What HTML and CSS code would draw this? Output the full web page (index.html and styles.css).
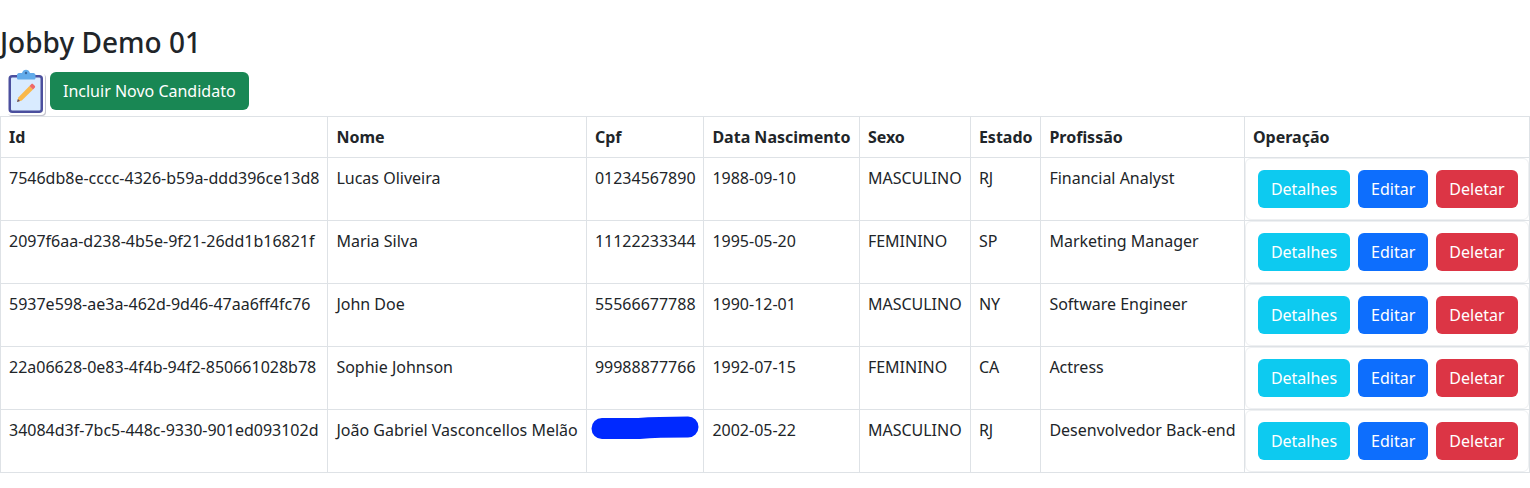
FILE: index.html
```html
<!DOCTYPE html>
<html>
<head>
  <meta charset="UTF-8">
  <title>Jobby Demo 01</title>
  <link rel="stylesheet" href="styles.css">
</head>
<body>
  <h3 class="title">Jobby Demo 01</h3>

  <div class="toolbar">
    <svg class="logo" xmlns="http://www.w3.org/2000/svg" viewBox="0 0 40 48">
      <rect x="2" y="6" width="38" height="42" rx="4" fill="#c4c4ce"/>
      <rect x="1" y="5" width="38" height="42" rx="4" fill="#fff"/>
      <path d="M9 6c1-3 2-3 3-3h3c2-4 9-4 11 0h3c1 0 2 0 3 3z" fill="#fff"/>
      <rect x="3.750" y="8.250" width="32" height="35.500" rx="2.500" fill="#d9ebff" stroke="#4b4f9e" stroke-width="2.500"/>
      <path d="M11 10V7c0-1 .8-2 2-2h3c1-4.500 7-4.500 8 0h3.500c1 0 2 1 2 2v3c0 1-.8 1.500-1.500 1.500H12.500C11.800 11.500 11 11 11 10z" fill="#62abea"/>
      <circle cx="20" cy="5" r="1.200" fill="#39689e"/>
      <path d="M11 34l1.500-4.800L23.500 18l3.500 3.500L15.800 32.500z" fill="#f9b84a"/>
      <path d="M23.500 18l1.700-1.700c.6-.6 1.400-.6 2 0l1.500 1.500c.6.6.6 1.400 0 2L27 21.500z" fill="#ee6a6a"/>
      <path d="M11 34l.9-3 2.100 2.100z" fill="#5a4a6a"/>
    </svg>
    <button class="btn btn-success">Incluir Novo Candidato</button>
  </div>

  <table class="candidates">
    <thead>
      <tr>
        <th class="col-id">Id</th>
        <th class="col-nome">Nome</th>
        <th class="col-cpf">Cpf</th>
        <th class="col-data">Data Nascimento</th>
        <th class="col-sexo">Sexo</th>
        <th class="col-estado">Estado</th>
        <th class="col-prof">Profissão</th>
        <th>Operação</th>
      </tr>
    </thead>
    <tbody>
      <tr>
        <td>7546db8e-cccc-4326-b59a-ddd396ce13d8</td>
        <td>Lucas Oliveira</td>
        <td>01234567890</td>
        <td>1988-09-10</td>
        <td>MASCULINO</td>
        <td>RJ</td>
        <td>Financial Analyst</td>
        <td class="ops">
          <div class="ops-box">
            <button class="btn btn-info">Detalhes</button>
            <button class="btn btn-primary">Editar</button>
            <button class="btn btn-danger">Deletar</button>
          </div>
        </td>
      </tr>
      <tr>
        <td>2097f6aa-d238-4b5e-9f21-26dd1b16821f</td>
        <td>Maria Silva</td>
        <td>11122233344</td>
        <td>1995-05-20</td>
        <td>FEMININO</td>
        <td>SP</td>
        <td>Marketing Manager</td>
        <td class="ops">
          <div class="ops-box">
            <button class="btn btn-info">Detalhes</button>
            <button class="btn btn-primary">Editar</button>
            <button class="btn btn-danger">Deletar</button>
          </div>
        </td>
      </tr>
      <tr>
        <td>5937e598-ae3a-462d-9d46-47aa6ff4fc76</td>
        <td>John Doe</td>
        <td>55566677788</td>
        <td>1990-12-01</td>
        <td>MASCULINO</td>
        <td>NY</td>
        <td>Software Engineer</td>
        <td class="ops">
          <div class="ops-box">
            <button class="btn btn-info">Detalhes</button>
            <button class="btn btn-primary">Editar</button>
            <button class="btn btn-danger">Deletar</button>
          </div>
        </td>
      </tr>
      <tr>
        <td>22a06628-0e83-4f4b-94f2-850661028b78</td>
        <td>Sophie Johnson</td>
        <td>99988877766</td>
        <td>1992-07-15</td>
        <td>FEMININO</td>
        <td>CA</td>
        <td>Actress</td>
        <td class="ops">
          <div class="ops-box">
            <button class="btn btn-info">Detalhes</button>
            <button class="btn btn-primary">Editar</button>
            <button class="btn btn-danger">Deletar</button>
          </div>
        </td>
      </tr>
      <tr>
        <td>34084d3f-7bc5-448c-9330-901ed093102d</td>
        <td>João Gabriel Vasconcellos Melão</td>
        <td class="hidden-cpf">
          <span class="cpf-text">00000000000</span>
          <!-- scribbled over in the original -->
          <svg class="scribble" xmlns="http://www.w3.org/2000/svg" viewBox="0 0 117 26">
            <path d="M15 13.500H52C64 12.500 84 12 101 12" fill="none" stroke="#0029ff" stroke-width="21" stroke-linecap="round"/>
          </svg>
        </td>
        <td>2002-05-22</td>
        <td>MASCULINO</td>
        <td>RJ</td>
        <td>Desenvolvedor Back-end</td>
        <td class="ops">
          <div class="ops-box">
            <button class="btn btn-info">Detalhes</button>
            <button class="btn btn-primary">Editar</button>
            <button class="btn btn-danger">Deletar</button>
          </div>
        </td>
      </tr>
    </tbody>
  </table>
</body>
</html>
```

FILE: styles.css
```css
* {
  box-sizing: border-box;
}

body {
  font-family: "Noto Sans", sans-serif;
  font-size: 16px;
  line-height: 1.5;
  margin: 0;
  color: #212529;
  background-color: #fff;
}

.title {
  font-size: 28px;
  font-weight: 500;
  line-height: 1.2;
  margin: 0;
  padding-top: 26px;
  height: 70px;
}

.toolbar {
  display: flex;
  align-items: flex-start;
  gap: 4px;
  height: 46px;
}

.logo {
  width: 40px;
  height: 48px;
  margin-left: 6px;
  margin-top: -2px;
}

.btn {
  font-family: inherit;
  font-size: 16px;
  line-height: 24px;
  padding: 6px 12px;
  border: 1px solid transparent;
  border-radius: 6px;
  color: #fff;
  cursor: pointer;
}

.toolbar .btn {
  margin-top: 2px;
}

.btn-success {
  background-color: #198754;
}

.btn-info {
  background-color: #0dcaf0;
}

.btn-primary {
  background-color: #0d6efd;
}

.btn-danger {
  background-color: #dc3545;
}

.candidates {
  width: 100%;
  border-collapse: collapse;
  table-layout: fixed;
}

.candidates th,
.candidates td {
  border: 1px solid #dee2e6;
  padding: 8px;
  text-align: left;
  vertical-align: top;
  white-space: nowrap;
}

.candidates th {
  font-weight: 700;
}

.col-id { width: 327.4px; }
.col-nome { width: 258.5px; }
.col-cpf { width: 117.5px; }
.col-data { width: 155.5px; }
.col-sexo { width: 111px; }
.col-estado { width: 70.5px; }
.col-prof { width: 203.5px; }

.candidates tbody tr {
  height: 63px;
}

.candidates td.ops {
  padding: 0;
}

.ops-box {
  display: flex;
  gap: 8px;
  padding: 11px 12px;
  border: 1px solid #eef0f2;
  border-radius: 6px;
}

.hidden-cpf {
  position: relative;
}

.cpf-text {
  visibility: hidden;
}

.scribble {
  position: absolute;
  left: 0;
  top: 5px;
  width: 117px;
  height: 26px;
}
```
